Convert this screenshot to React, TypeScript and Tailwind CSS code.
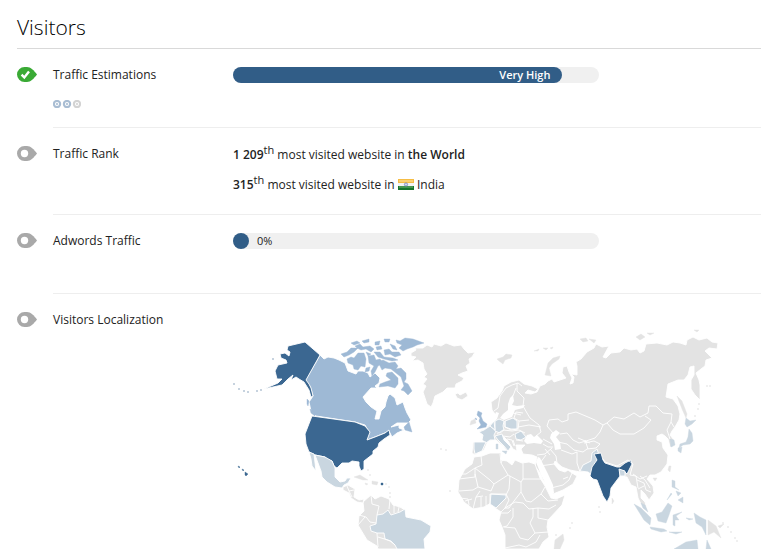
import type { ReactNode } from "react";

const GREY = "#e3e3e3";
const PALE = "#c9d6e0";
const SKY = "#9eb9d5";
const NAVY = "#3b6791";
const DEEP = "#315d87";

type Area = { name: string; fill: string; d: string };

const mainland: Area[] = [
  {
    name: "Greenland",
    fill: GREY,
    d: "M411 353L416 350L415 348L423 348L427 345L432 347L434 344L441 346L446 343L454 346L461 345L464 349L468 353L475 352L472 357L469 359L470 363L466 366L468 371L462 373L458 375L464 378L462 381L456 384L455 388L447 388L443 392L435 396L433 403L431 407L427 404L425 398L423 392L426 386L423 384L427 379L424 377L427 374L424 369L423 363L418 360L412 361L416 357L411 356Z",
  },
  { name: "Iceland", fill: GREY, d: "M455 394L458 393L460 395L466 392L468 396L462 400L457 398Z" },
  {
    name: "Eurasia",
    fill: GREY,
    d: "M492 410L491 402L497 398L502 391L504 386L511 382L519 380L524 384L532 386L538 389L535 392L528 390L525 393L531 394L537 392L540 386L545 384L548 381L552 379L554 382L560 380L566 378L562 373L563 367L567 366L569 372L572 378L570 384L573 383L574 377L571 374L577 375L577 366L576 362L581 359L587 352L594 348L596 344L602 347L609 346L603 357L606 358L611 353L620 352L624 348L631 350L637 349L640 353L644 351L646 344L657 343L667 345L673 342L680 343L686 345L687 340L693 337L699 340L707 338L712 342L718 343L717 349L709 348L705 351L708 354L712 358L706 360L705 366L701 369L696 373L699 380L700 385L700 400L695 395L691 389L691 380L694 375L694 366L690 367L688 375L684 380L678 380L668 384L666 397L673 399L678 406L680 414L679 420L675 427L672 431L670 435L674 440L673 447L670 447L668 439L665 436L662 434L657 436L657 440L662 442L663 448L668 455L667 464L661 472L655 475L650 475L647 479L653 486L654 493L649 500L645 494L641 490L641 498L645 502L648 512L643 508L638 498L636 487L631 485L627 477L620 476L618 479L611 488L610 496L607 501L603 496L597 480L592 479L590 472L580 472L570 470L562 467L555 461L554 464L559 470L565 472L568 470L572 473L577 476L573 484L563 490L553 494L550 488L543 480L540 473L535 466L537 457L532 455L523 454L521 449L525 445L516 445L517 451L513 449L508 441L504 437L502 436L505 442L511 447L507 451L503 446L496 440L488 441L484 450L475 455L472 453L473 442L484 442L486 438L479 431L485 429L492 423L495 419L495 414Z",
  },
  {
    name: "Africa",
    fill: GREY,
    d: "M474 457L482 456L490 453L501 453L501 460L507 461L512 465L515 460L522 463L529 462L535 464L540 478L545 486L551 498L556 499L565 495L562 505L548 520L547 527L549 537L543 542L539 549L505 549L505 535L502 527L499 520L501 512L495 508L491 503L484 507L473 509L464 502L458 492L459 480L465 469L472 464Z",
  },
  {
    name: "South America",
    fill: GREY,
    d: "M363 502L371 495L375 499L381 496L389 499L393 505L400 507L405 510L405 549L378 549L377 546L367 540L358 525L359 516L364 511Z",
  },
  { name: "Central America", fill: GREY, d: "M343 487L348 485L355 489L354 497L359 500L364 499L363 503L357 502L351 498L349 493L343 490Z" },
  {
    name: "Canada",
    fill: SKY,
    d: "M320 355L324 359L328 357L334 358L339 360L345 363L348 371L356 374L358 371L363 371L368 373L370 377L375 373L377 375L380 378L379 383L375 386L377 388L371 388L363 397L366 402L371 407L377 411L375 419L379 419L381 411L385 407L386 402L388 396L390 394L395 398L397 405L403 402L405 408L407 413L411 420L408 423L397 423L391 427L399 425L399 428L404 430L397 433L392 437L389 431L385 433L375 437L367 440L369 432L365 425L355 422L316 416L311 411L309 402L313 396L310 386L305 381Z",
  },
  {
    name: "Alaska",
    fill: NAVY,
    d: "M288 346L305 342L320 355L306 380L309 384L311 388L313 396L311 397L309 390L304 382L299 379L296 377L291 380L293 375L288 379L282 385L264 389L278 383L282 379L277 379L275 371L278 365L287 363L286 360L281 358L280 354L285 353L289 356L290 352L287 350Z",
  },
  {
    name: "United States",
    fill: NAVY,
    d: "M312 416L355 422L365 426L370 432L367 440L375 437L385 433L389 430L390 435L384 439L379 443L378 447L373 451L373 454L364 461L364 469L361 471L359 466L359 462L352 461L349 463L342 463L337 468L334 466L332 461L328 460L325 457L315 455L309 452L306 444L305 434Z",
  },
  {
    name: "Mexico",
    fill: PALE,
    d: "M315 455L325 457L332 461L335 468L335 477L340 482L345 481L347 478L351 478L348 483L344 485L342 488L335 487L327 482L322 477L321 471Z M309 452L314 454L316 471L312 466L311 459Z",
  },
  {
    name: "Brazil",
    fill: PALE,
    d: "M405 509L406 517L421 520L431 526L430 532L424 539L425 549L397 549L395 545L390 541L385 539L384 533L377 533L371 531L370 526L376 524L377 515L383 514L388 510L391 515L400 512Z",
  },
  { name: "France", fill: PALE, d: "M479 432L484 430L490 426L496 431L494 435L495 440L490 440L486 443L482 440L483 435Z" },
  { name: "Spain", fill: PALE, d: "M474 442L486 442L482 451L475 454L474 449Z" },
  { name: "Germany", fill: PALE, d: "M495 421L499 419L504 421L503 426L504 430L500 433L495 431Z" },
  { name: "Benelux", fill: PALE, d: "M490 426L494 421L495 430Z" },
  { name: "Poland", fill: PALE, d: "M505 421L513 418L517 421L517 429L511 429L505 427Z" },
  { name: "Italy", fill: PALE, d: "M495 436L502 434L504 440L511 447L508 451L504 446L498 440Z" },
  { name: "Romania", fill: PALE, d: "M515 434L521 431L526 437L521 440L516 439Z" },
  { name: "Nigeria", fill: PALE, d: "M491 494L506 495L506 498L500 504L496 508L490 504Z" },
  { name: "Pakistan", fill: PALE, d: "M580 471L583 465L591 461L592 453L597 449L599 455L595 465L592 469L592 475L588 472Z" },
  {
    name: "India",
    fill: DEEP,
    d: "M594 454L601 453L603 460L605 463L617 467L620 467L625 463L631 460L632 464L627 474L624 471L620 470L620 476L611 488L610 496L607 502L603 496L597 480L593 479L590 476L592 467L597 460Z",
  },
  { name: "Bangladesh", fill: PALE, d: "M619 469L625 471L625 476L620 476Z" },
];

const islands: Area[] = [
  { name: "Madagascar", fill: GREY, d: "M563 534L564 540L560 549L554 549L555 540Z" },
  { name: "Cuba", fill: GREY, d: "M354 477L360 475L368 480L363 480Z M372 481L378 482L377 485L372 484Z M365 483L368 484L366 485Z" },
  { name: "Newfoundland", fill: SKY, d: "M404 427L409 422L412 432L405 430Z" },
  {
    name: "Baffin Island",
    fill: SKY,
    d: "M378 362L383 360L389 363L395 362L398 366L396 369L401 368L406 373L406 379L404 382L408 384L412 391L408 395L404 391L401 390L404 386L401 377L396 373L391 369L385 368L382 370Z",
  },
  { name: "Southampton Island", fill: SKY, d: "M387 373L392 372L398 378L398 384L395 388L388 386L379 387L380 384L385 382L391 380L386 376Z" },
  { name: "Victoria Island", fill: SKY, d: "M347 359L351 357L354 358L358 353L364 353L366 359L365 367L361 366L358 370L354 369L353 365L348 363Z" },
  { name: "Banks Island", fill: SKY, d: "M341 354L347 352L351 348L358 348L354 352L349 355L344 357Z" },
  {
    name: "Ellesmere Island",
    fill: SKY,
    d: "M396 340L400 341L405 338L413 339L424 343L417 345L413 347L407 349L403 351L399 348L402 345L397 343Z",
  },
  { name: "Devon Island", fill: SKY, d: "M384 350L389 349L392 352L399 352L401 355L395 357L390 354L385 355Z" },
  {
    name: "Arctic Archipelago",
    fill: SKY,
    d: "M351 343L357 341L360 343L354 345Z M362 341L369 339L369 342L364 343Z M355 346L360 344L363 347L370 346L374 349L371 352L366 349L361 350L357 348Z M375 342L380 341L379 345L375 345Z M384 339L390 339L389 342L385 342Z M390 344L395 346L397 350L393 349Z M376 347L381 346L382 349L377 350Z M368 356L374 355L376 360L380 359L383 363L378 366L375 372L372 376L371 371L374 366L369 363Z M366 352L371 354L368 356Z M374 352L380 352L384 357L393 358L398 360L392 361L384 359L378 357Z M366 368L370 367L369 371L365 372Z",
  },
  { name: "Haida Gwaii", fill: SKY, d: "M307 399L309 401L308 406L307 404Z M310 409L315 413L315 416L311 413Z" },
  { name: "Hawaii", fill: NAVY, d: "M245 472L248 474L246 476L245 475Z M242 469L244 470L243 471Z M238 466L240 467L239 468Z" },
  { name: "Puerto Rico", fill: NAVY, d: "M381 483H383V485H381Z" },
  { name: "Great Britain", fill: SKY, d: "M478 411L482 413L481 416L483 421L487 424L486 427L477 429L481 425L479 421L480 418L477 415Z M475 418L477 419L476 420Z" },
  { name: "Ireland", fill: GREY, d: "M471 421L475 419L476 423L470 425Z" },
  { name: "Sicily and Sardinia", fill: PALE, d: "M502 451L507 451L506 454Z M496 444L498 444L498 449L496 449Z" },
  { name: "Sri Lanka", fill: GREY, d: "M612 498L614 501L612 504Z" },
  { name: "South Korea", fill: PALE, d: "M670 439L674 440L675 445L671 447Z" },
  { name: "Japan", fill: PALE, d: "M686 418L690 421L696 420L692 424L687 427L685 424Z M689 429L692 433L693 441L690 444L683 445L679 448L680 444L686 442L688 437Z M678 448L682 447L681 453L678 451Z" },
  { name: "Sakhalin", fill: GREY, d: "M677 396L682 401L687 414L686 418L682 409Z" },
  { name: "Taiwan", fill: GREY, d: "M669 466L671 466L670 472L668 470Z M653 478L657 478L655 481Z" },
  { name: "Philippines", fill: PALE, d: "M672 480L675 481L675 487L679 490L672 487Z M676 491L681 493L678 496Z M678 500L683 497L683 503Z M672 494L667 500L671 493Z" },
  { name: "Sumatra", fill: PALE, d: "M634 504L641 508L651 518L650 525L644 520Z" },
  { name: "Malaysia", fill: PALE, d: "M641 503L645 505L648 512L643 508Z" },
  { name: "Borneo", fill: PALE, d: "M656 514L662 512L668 503L672 506L669 515L666 523L658 521Z" },
  { name: "Java", fill: PALE, d: "M650 527L664 529L667 531L661 532L651 529Z M669 532L682 532L676 534Z" },
  { name: "Sulawesi", fill: PALE, d: "M673 515L682 512L676 516L679 520L675 520L675 526L673 525Z M686 518L693 519L689 520Z" },
  { name: "West Papua", fill: PALE, d: "M694 513L700 517L706 520L706 535L702 527L696 523Z" },
  { name: "Papua New Guinea", fill: GREY, d: "M708 520L716 526L721 538L714 532L708 535Z M718 526L724 524L720 528Z" },
  { name: "Australia", fill: PALE, d: "M674 549L686 542L697 540L698 549Z M706 549L707 540L711 549Z" },
  { name: "Svalbard", fill: GREY, d: "M497 359L503 357L506 354L512 355L511 358L505 360L503 364L499 361Z" },
  { name: "Franz Josef Land", fill: GREY, d: "M534 351L539 349L538 351Z M543 348L548 348L546 350Z M550 348L553 347L552 349Z" },
  { name: "Novaya Zemlya", fill: GREY, d: "M545 375L548 363L553 358L560 356L559 359L552 364L549 368L551 376Z" },
  { name: "Severnaya Zemlya", fill: GREY, d: "M580 339L586 338L588 341L583 342Z M589 339L596 340L594 343Z" },
  { name: "New Siberian Islands", fill: GREY, d: "M636 337L641 334L645 337L640 340Z M647 333L654 333L650 335Z M694 330L699 330L697 332Z" },
];

const seas = [
  "M524 441L527 435L531 434L534 437L537 435L543 441L541 444L534 443L527 444Z",
  "M551 434L556 430L560 433L556 437L560 442L561 449L555 450L554 444L550 438Z",
  "M510 398L513 395L514 401L512 405L517 406L525 405L523 408L515 410L512 417L504 420L500 418L503 414L508 410L508 404Z",
  "M492 414L494 417L496 412L499 413L497 419L492 423L489 420Z",
  "M538 457L540 458L548 474L553 485L554 493L551 494L541 475L536 462Z",
];

const borders = [
  "M494 411L498 408L500 396L506 388L512 385L518 383L522 386",
  "M517 383L517 391L524 398L523 406L527 413L530 418L539 425L541 432L536 436",
  "M513 396L516 388",
  "M505 421V427L511 430L518 429L519 421L514 418L516 412L523 413",
  "M519 421L529 420M518 427L529 425L541 427M513 413L521 415",
  "M497 434L503 430L512 431L519 430L525 433M503 436L510 437L514 434M507 439L512 440L514 446M516 440L523 441M513 440L515 446",
  "M543 439L552 444M543 444L548 447L553 447M545 449L550 455M553 433L547 426L549 420L558 419L562 422L568 420V414L576 412L588 417L595 420L603 425",
  "M560 434L567 433L573 440L579 443L586 441L595 438L600 432L603 425L607 423L614 417L624 419L634 413L640 417L648 413L649 406L656 406L663 413L672 414L671 422L674 427",
  "M607 423L613 430L620 434L634 434L644 428L651 420L645 416",
  "M558 442L567 444L574 450L583 452L587 449L596 448L600 444L594 441L584 443",
  "M578 438L590 443M585 440L588 449M561 450L572 454L577 452L577 463L580 472",
  "M550 449L556 456L557 463M537 455L545 454L552 448M540 463L546 455M538 466L547 465L554 464",
  "M551 488L563 485L569 480L572 473M563 479L568 477",
  "M603 459L605 462L617 466L628 460L633 464L630 475L636 476L638 488",
  "M633 474L640 479L647 476M637 480L644 483L646 490L651 492M640 476L645 480L650 488M638 489L644 486",
  "M671 422L667 430L670 439",
  "M481 456L482 465L475 468L466 474L459 474M475 468V477L459 479",
  "M475 468L490 480L494 484L508 475L501 463L500 454",
  "M475 474L478 487L473 490L459 491M478 487L491 491L494 484",
  "M508 475L521 482L523 479V463M523 479L541 479M501 463L504 457",
  "M510 476L509 489L506 495M521 482L521 492L514 501L509 508",
  "M490 494L506 494L509 500L505 508L501 512M505 508L515 502L523 503L529 509L538 508",
  "M521 492L526 501L531 502L541 494L545 487M541 494L548 501L558 500M538 508L549 509L556 505",
  "M538 508L538 518L548 520M533 508V517L530 523L535 533L548 532",
  "M513 508V517L507 526L503 527M504 527L515 528L520 538L528 540L535 533M505 548L519 545L526 547L536 542L540 535",
  "M473 509L476 497L483 496M481 507V497M486 506V496M490 504V494M469 505L468 499L460 498M465 501L472 499M476 497L480 491",
  "M499 513H508L511 510M509 508L505 508",
  "M371 495L372 504L379 506L377 515M390 499L389 509M399 507L398 512M394 505L394 513",
  "M359 515L366 517L370 522L376 523M358 525L365 517M377 533L378 547M378 537L391 541L395 545",
  "M347 486L349 491L354 490M349 491L352 497",
];

const islets = [
  [234, 384], [239, 389], [244, 391], [248, 392], [257, 391], [261, 390], [273, 359], [368, 470], [370, 475], [386, 484],
  [389, 487], [390, 493], [390, 497], [441, 449], [446, 450], [450, 491], [599, 507], [600, 512], [572, 523], [570, 528],
  [556, 535], [699, 404], [698, 409], [695, 416], [707, 386], [710, 386], [723, 523], [728, 527], [731, 532], [735, 538], [737, 541],
];

function WorldMap() {
  return (
    <svg viewBox="233 328 528 221" className="block w-full" role="img" aria-label="Visitors by country">
      <g stroke="#fff" strokeWidth="0.9" strokeLinejoin="round">
        {mainland.map((area) => (
          <path key={area.name} d={area.d} fill={area.fill} />
        ))}
      </g>
      <g fill="none" stroke="#fff" strokeWidth="0.9" strokeLinejoin="round">
        {borders.map((d) => (
          <path key={d} d={d} />
        ))}
      </g>
      {seas.map((d) => (
        <path key={d} d={d} fill="#fff" />
      ))}
      <g strokeWidth="0.4" strokeLinejoin="round">
        {islands.map((area) => (
          <path key={area.name} d={area.d} fill={area.fill} stroke={area.fill} />
        ))}
      </g>
      {islets.map(([x, y]) => (
        <circle key={`${x}-${y}`} cx={x} cy={y} r="0.8" fill={x < 280 ? "#7f9bb7" : "#dedede"} />
      ))}
    </svg>
  );
}

function Marker({ done = false }: { done?: boolean }) {
  return (
    <svg viewBox="0 0 20 15" className="mt-[18px] h-[15px] w-5 shrink-0" aria-hidden="true">
      <path d="M7.500 0H10C13.500 0 17 3.500 20 7.500C17 11.500 13.500 15 10 15H7.500A7.500 7.500 0 0 1 7.500 0Z" fill={done ? "#3aaa35" : "#a9a9a9"} />
      {done ? (
        <path d="M4.600 7.700L7.300 10.500L12 4.500" fill="none" stroke="#fff" strokeWidth="2.400" />
      ) : (
        <circle cx="7.500" cy="7.500" r="3.700" fill="#fff" />
      )}
    </svg>
  );
}

function Difficulty() {
  return (
    <svg viewBox="0 0 28 8" className="mt-[15px] block h-2 w-7" role="img" aria-label="2 out of 3">
      {[4, 14, 24].map((cx) => (
        <g key={cx} fill={cx < 20 ? "#a9bdd3" : "#d3d3d3"}>
          <circle cx={cx} cy="4" r="4.200" />
          <circle cx={cx} cy="4" r="2.100" fill="#fff" />
          <circle cx={cx} cy="4" r="1.100" />
        </g>
      ))}
    </svg>
  );
}

function IndiaFlag() {
  return (
    <svg viewBox="0 0 16 11" className="inline-block h-[11px] w-4 align-[-1px]" role="img" aria-label="Flag of India">
      <path d="M0 0H16V4H0Z" fill="#f6bd45" />
      <path d="M1 1H15V3H1Z" fill="#fbd173" />
      <path d="M0 4H16V7H0Z" fill="#f3f3f3" />
      <path d="M0 7H16V11H0Z" fill="#17752c" />
      <path d="M1 7H15V9H1Z" fill="#46964f" />
      <circle cx="8" cy="5.500" r="1.600" fill="#d4daef" stroke="#7182bb" strokeWidth="0.800" />
    </svg>
  );
}

function Row({ label, done, extra, last, height, children }: {
  label: string;
  done?: boolean;
  extra?: ReactNode;
  last?: boolean;
  height: string;
  children: ReactNode;
}) {
  return (
    <section className="flex gap-4">
      <Marker done={done} />
      <div className={`flex min-w-0 flex-1 ${height} ${last ? "" : "border-b border-[#eeeeee]"}`}>
        <div className="w-[180px] shrink-0 pt-4">
          <h2 className="leading-5">{label}</h2>
          {extra}
        </div>
        <div className="min-w-0 flex-1">{children}</div>
      </div>
    </section>
  );
}

export default function App() {
  return (
    <main className="bg-white pt-3 pr-3 pl-[17px] font-['Open_Sans',sans-serif] text-[12px] text-[#222222]">
      <h1 className="h-[37px] border-b border-[#d9d9d9] text-[21px] leading-[30px] font-light text-black">Visitors</h1>

      <Row label="Traffic Estimations" done extra={<Difficulty />} height="min-h-[79px]">
        <div className="mt-[18px] h-4 w-full max-w-[366px] rounded-full bg-[#f0f0f0]">
          <div className="h-4 w-[90%] rounded-full bg-[#315d87] pr-3 text-right text-[11px] leading-4 font-semibold text-white">
            Very High
          </div>
        </div>
      </Row>

      <Row label="Traffic Rank" height="min-h-[87px]">
        <div className="flex flex-col gap-[10px] pt-[17px] leading-5">
          <p>
            <b className="font-semibold">1 209</b>
            <sup className="text-[11px]">th</sup> most visited website in <b className="font-semibold">the World</b>
          </p>
          <p>
            <b className="font-semibold">315</b>
            <sup className="text-[11px]">th</sup> most visited website in <IndiaFlag /> India
          </p>
        </div>
      </Row>

      <Row label="Adwords Traffic" height="min-h-[79px]">
        <div className="mt-[18px] flex h-4 w-full max-w-[366px] gap-2 rounded-full bg-[#f0f0f0]">
          <span className="size-4 rounded-full bg-[#315d87]" />
          <span className="text-[11px] leading-4">0%</span>
        </div>
      </Row>

      <Row label="Visitors Localization" last height="min-h-[255px]">
        <div className="pt-[34px]">
          <WorldMap />
        </div>
      </Row>
    </main>
  );
}
